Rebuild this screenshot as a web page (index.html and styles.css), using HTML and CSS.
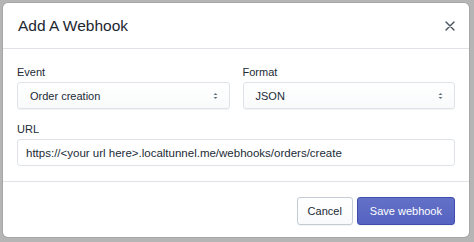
FILE: index.html
```html
<!DOCTYPE html>
<html lang="en">
  <head>
    <meta charset="UTF-8" />
    <meta name="viewport" content="width=device-width, initial-scale=1.0" />
    <title>Add A Webhook</title>
    <link rel="stylesheet" href="styles.css">
  </head>
  <body>
    <div class="modal">
      <!-- header -->
      <div class="modal-header">
        <h2 class="modal-title">Add A Webhook</h2>
        <button class="close" aria-label="Close">
          <svg width="10" height="10" viewBox="0 0 10 10">
            <path d="M1 1L9 9M9 1L1 9" stroke="#454f5b" stroke-width="1.4" stroke-linecap="round" />
          </svg>
        </button>
      </div>

      <!-- form -->
      <div class="modal-body">
        <div class="row">
          <div class="field">
            <label>Event</label>
            <div class="select">
              <span>Order creation</span>
              <svg class="arrows" width="5" height="8" viewBox="0 0 5 8">
                <path d="M0.5 3L2.5 1L4.5 3Z M0.5 5L2.5 7L4.5 5Z" fill="#637381" />
              </svg>
            </div>
          </div>
          <div class="field">
            <label>Format</label>
            <div class="select">
              <span>JSON</span>
              <svg class="arrows" width="5" height="8" viewBox="0 0 5 8">
                <path d="M0.5 3L2.5 1L4.5 3Z M0.5 5L2.5 7L4.5 5Z" fill="#637381" />
              </svg>
            </div>
          </div>
        </div>
        <div class="field">
          <label>URL</label>
          <input class="input" type="text" value="https://<your url here>.localtunnel.me/webhooks/orders/create" />
        </div>
      </div>

      <!-- footer -->
      <div class="modal-footer">
        <button class="btn">Cancel</button>
        <button class="btn primary">Save webhook</button>
      </div>
    </div>
  </body>
</html>
```

FILE: styles.css
```css
body {
  margin: 0;
  padding: 3px;
  background-color: #b5b5b5;
  font-family: "Liberation Sans", Arial, sans-serif;
  color: #212b36;
}

.modal {
  width: 466px;
  background-color: #fff;
  border-radius: 5px;
  box-shadow: 0 0 0 1px rgba(0, 0, 0, 0.08);
}

.modal-header {
  height: 45px;
  padding: 0 14px 0 15px;
  display: flex;
  align-items: center;
  justify-content: space-between;
  border-bottom: 1px solid #dfe3e8;
}

.modal-title {
  margin: 0;
  font-size: 15.5px;
  font-weight: normal;
  color: #1c2630;
}

.close {
  background: none;
  border: none;
  padding: 0;
  width: 10px;
  height: 10px;
  display: flex;
  cursor: pointer;
}

.modal-body {
  padding: 15px 14px 15px;
  display: flex;
  flex-direction: column;
  gap: 12px;
  border-bottom: 1px solid #dfe3e8;
}

.row {
  display: grid;
  grid-template-columns: 1fr 1fr;
  gap: 13px;
}

.field label {
  display: block;
  font-size: 11px;
  line-height: 16px;
  margin-bottom: 2px;
}

.select {
  height: 27px;
  box-sizing: border-box;
  padding: 0 11px 0 12px;
  display: flex;
  align-items: center;
  justify-content: space-between;
  font-size: 11px;
  border: 1px solid #dfe3e8;
  border-radius: 3px;
  background: linear-gradient(#fff, #f9fafb);
  box-shadow: 0 1px 0 rgba(22, 29, 37, 0.05);
}

.input {
  display: block;
  width: 100%;
  height: 27px;
  box-sizing: border-box;
  padding: 0 8px;
  font-family: inherit;
  font-size: 11.5px;
  color: #212b36;
  border: 1px solid #dfe3e8;
  border-radius: 3px;
  background-color: #fff;
  outline: none;
}

.modal-footer {
  padding: 15px 14px 12px;
  display: flex;
  justify-content: flex-end;
  gap: 4px;
}

.btn {
  height: 28px;
  padding: 0 10px;
  font-family: inherit;
  font-size: 11px;
  color: #212b36;
  border: 1px solid #c4cdd5;
  border-radius: 3px;
  background: linear-gradient(#fff, #f9fafb);
  box-shadow: 0 1px 0 rgba(22, 29, 37, 0.05);
  cursor: pointer;
}

.btn.primary {
  padding: 0 12px;
  color: #fff;
  border-color: #3f4eae;
  background: linear-gradient(#6371c7, #5563c1);
}
```
